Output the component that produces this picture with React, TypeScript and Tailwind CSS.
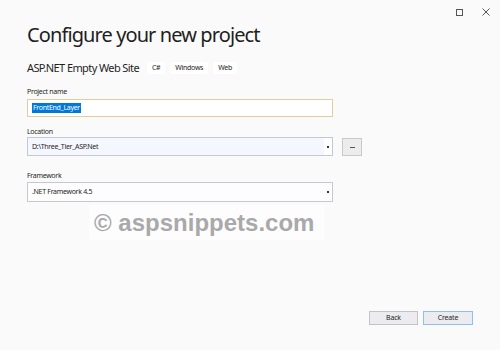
export default function App() {
  return (
    <div className="w-[500px] h-[350px] bg-[#fafafa] text-[#1e1e1e] font-['Noto_Sans',sans-serif] flex flex-col relative overflow-hidden">
      {/* Window controls */}
      <div className="flex justify-end items-center h-[18px] pt-[6px] pr-[10px] gap-[19px]">
        <div className="w-[7px] h-[7px] border border-[#555]" />
        <svg className="w-[8px] h-[8px]" viewBox="0 0 8 8" stroke="#555" strokeWidth={1}>
          <path d="M0.5 0.5l7 7M7.5 0.5l-7 7" />
        </svg>
      </div>

      <div className="pl-[27px] flex flex-col">
        <h1 className="text-[20px] leading-[26px] mt-[4px] tracking-[-0.9px]">Configure your new project</h1>

        <div className="flex items-center mt-[13px] h-[14px]">
          <span className="text-[11px] leading-[14px] tracking-[-0.6px] text-[#1e1e1e]">ASP.NET Empty Web Site</span>
          <div className="flex gap-[5px] ml-[8px] tracking-[-0.3px]">
            <span className="bg-white rounded-[3px] text-[7px] px-[5px] h-[12px] leading-[12px]">C#</span>
            <span className="bg-white rounded-[3px] text-[7px] px-[5px] h-[12px] leading-[12px]">Windows</span>
            <span className="bg-white rounded-[3px] text-[7px] px-[5px] h-[12px] leading-[12px]">Web</span>
          </div>
        </div>

        <label className="text-[7px] leading-[10px] tracking-[-0.3px] mt-[12px]">Project name</label>
        <div className="mt-[2px] w-[306px] h-[18px] border border-[#e3cd9f] bg-white flex items-center pl-[4px]">
          <span className="bg-[#0078d7] text-white text-[7px] leading-[10px] tracking-[-0.3px] px-[1px]">FrontEnd_Layer</span>
        </div>

        <label className="text-[7px] leading-[10px] tracking-[-0.3px] mt-[10px]">Location</label>
        <div className="flex items-center">
          <div className="w-[306px] h-[19px] border border-[#c4c8d3] bg-[#f5f7ff] flex items-center pl-[4px] justify-between">
            <span className="text-[7px] leading-[10px] tracking-[-0.3px]">D:\Three_Tier_ASP.Net</span>
            <div className="w-[8px] h-full bg-white flex items-center justify-center">
              <div className="w-[2px] h-[2px] bg-[#333]" />
            </div>
          </div>
          <div className="ml-[9px] w-[20px] h-[18px] border border-[#c8c8c8] bg-[#ececed] flex items-center justify-center">
            <div className="w-[5px] h-px bg-[#555] mt-[2px]" />
          </div>
        </div>

        <label className="text-[7px] leading-[10px] tracking-[-0.3px] mt-[15px]">Framework</label>
        <div className="mt-[1px] w-[306px] h-[20px] border border-[#c4c8d3] bg-[#fdfdfd] flex items-center pl-[4px] justify-between">
          <span className="text-[7px] leading-[10px] tracking-[-0.3px]">.NET Framework 4.5</span>
          <div className="w-[8px] h-full flex items-center justify-center">
            <div className="w-[2px] h-[2px] bg-[#333]" />
          </div>
        </div>

        <div className="mt-[3px] ml-[62px] w-[236px] h-[35px] bg-[#fdfdfd] flex items-center pl-[5px]">
          <span className="font-['Liberation_Sans',sans-serif] font-bold text-[24px] leading-[26px] text-[#a9a9a9]">© aspsnippets.com</span>
        </div>
      </div>

      <div className="flex justify-end gap-[5px] mt-auto mb-[25px] pr-[27px]">
        <button className="w-[49px] h-[14px] bg-[#ececf0] border border-[#c3c3c3] text-[7px] leading-[12px] tracking-[-0.2px]">Back</button>
        <button className="w-[50px] h-[14px] bg-[#ececf0] border border-[#8cc0f2] text-[7px] leading-[12px] tracking-[-0.2px]">Create</button>
      </div>
    </div>
  );
}
